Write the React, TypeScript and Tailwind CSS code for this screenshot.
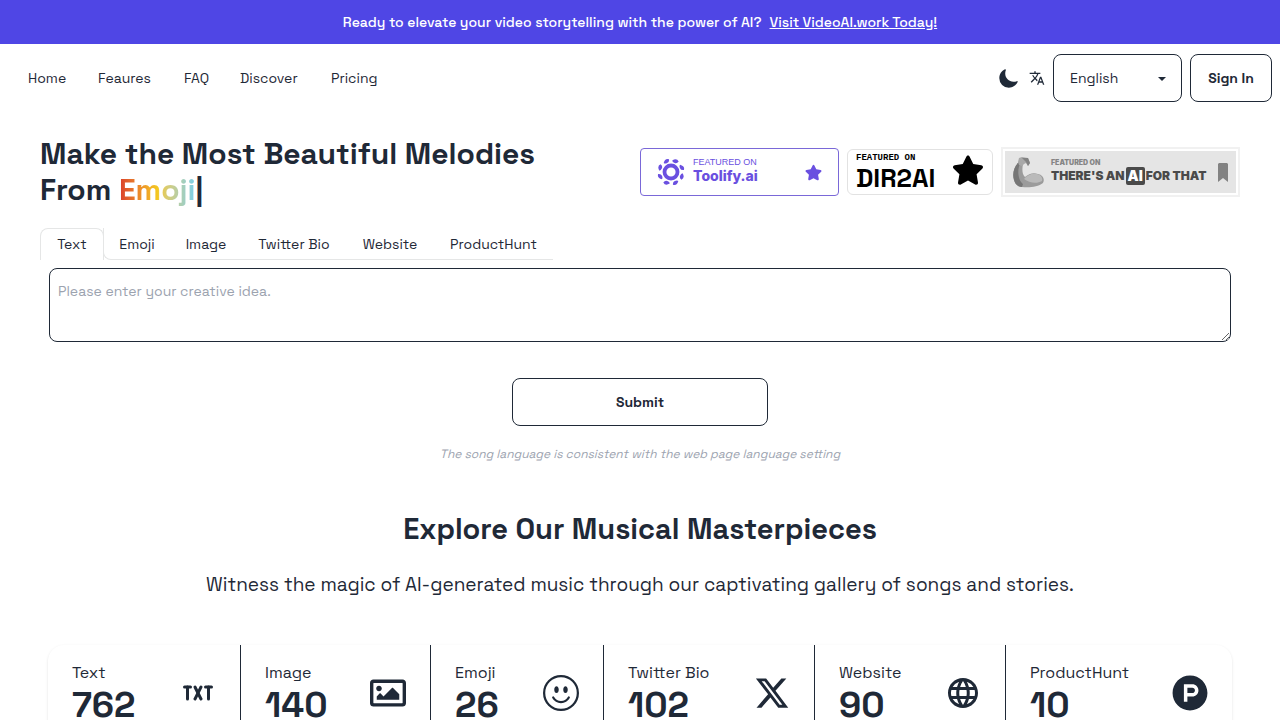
import type { ReactNode } from "react";
import { BsEmojiSmile } from "react-icons/bs";
import { FaRegImage } from "react-icons/fa";
import { FaProductHunt, FaXTwitter } from "react-icons/fa6";
import { IoMoon } from "react-icons/io5";
import { MdLanguage, MdTranslate } from "react-icons/md";
import { TbTxt } from "react-icons/tb";

const star =
  "M12 1.2c.6 0 1 .4 1.3.9l2.8 5.800 6.300.9c1.300.2 1.800 1.700.9 2.600l-4.600 4.500 1.100 6.300c.2 1.300-1.100 2.200-2.200 1.600L12 20.800l-5.600 3c-1.100.6-2.400-.3-2.200-1.600l1.100-6.300L.7 11.400c-.9-.9-.4-2.400.9-2.600l6.300-.9 2.800-5.800c.3-.5.7-.9 1.300-.9z";

function Banner() {
  return (
    <div className="flex h-11 items-center justify-center gap-2 bg-[#4f46e5] px-4 text-sm font-medium text-white">
      <p>Ready to elevate your video storytelling with the power of AI?</p>
      <a href="#videoai" className="underline">
        Visit VideoAI.work Today!
      </a>
    </div>
  );
}

const links = [
  { label: "Home", width: "min-w-[70px]" },
  { label: "Feaures", width: "min-w-[86px]" },
  { label: "FAQ", width: "min-w-14" },
  { label: "Discover", width: "min-w-[91px]" },
  { label: "Pricing", width: "min-w-[76px]" },
];

function Header() {
  return (
    <header className="flex items-center justify-between px-2 py-2.5">
      <nav className="flex pl-1 text-sm">
        {links.map((l) => (
          <a key={l.label} href={`#${l.label}`} className={`${l.width} py-2 pl-4`}>
            {l.label}
          </a>
        ))}
      </nav>
      <div className="flex items-center gap-2">
        <button aria-label="Dark mode" className="pr-0.5">
          <IoMoon size={21} />
        </button>
        <MdTranslate size={16} />
        <div className="relative">
          <select
            aria-label="Language"
            className="h-12 w-[129px] appearance-none rounded-lg border border-[#1f2937] bg-white px-4 text-sm"
          >
            <option>English</option>
            <option>中文</option>
          </select>
          <svg
            viewBox="0 0 8 4"
            className="pointer-events-none absolute top-[23px] right-4 h-1 w-2"
            fill="currentColor"
          >
            <path d="M0 0h8L4 4z" />
          </svg>
        </div>
        <button className="h-12 w-[82px] rounded-lg border border-[#1f2937] text-sm font-bold">
          Sign In
        </button>
      </div>
    </header>
  );
}

function ToolifyBadge() {
  const petals = [0, 45, 90, 135, 180, 225, 270, 315];
  return (
    <a
      href="#toolify"
      className="flex h-12 w-[199px] items-center rounded border border-[#7a68d8] px-4 text-[#6a50e0]"
    >
      <svg viewBox="-14 -14 28 28" className="size-7 shrink-0" fill="currentColor">
        <circle r="6.500" fill="none" stroke="currentColor" strokeWidth="3.800" />
        {petals.map((a) => (
          <path
            key={a}
            transform={`rotate(${a + 22})`}
            d="M-3.200-11.200Q0-15.400 3.200-12.600Q2.400-9.700 0-9.800Q-2.600-9.800-3.200-11.200z"
          />
        ))}
      </svg>
      <span className="flex flex-1 flex-col pb-1 pl-2">
        <span className="font-['Liberation_Sans',sans-serif] text-[9px] leading-3">FEATURED ON</span>
        <span className="font-[Inter,sans-serif] text-sm leading-4 font-extrabold">Toolify.ai</span>
      </span>
      <svg viewBox="0 0 24 25" className="size-[17px]" fill="currentColor">
        <path d={star} />
      </svg>
    </a>
  );
}

function DirBadge() {
  return (
    <a
      href="#dir2ai"
      className="flex h-[46px] w-[146px] items-center justify-between rounded-md border border-[#e2e2e2] px-2 text-black"
    >
      <span className="flex flex-col gap-1">
        <span className="font-['Liberation_Mono',monospace] text-[9px] leading-2 font-bold whitespace-nowrap">
          FEATURED ON
        </span>
        <span className="text-[26px] leading-6 font-bold">DIR2AI</span>
      </span>
      <svg viewBox="0 0 24 25" className="mb-1 size-8 shrink-0" fill="currentColor">
        <path d={star} />
      </svg>
    </a>
  );
}

function ThatBadge() {
  return (
    <a href="#taaft" className="border-2 border-[#f1f1f1] p-0.5">
      <span className="flex h-[42px] w-[231px] items-center bg-[#e5e5e5] px-2 text-[#4a4a4a]">
        <svg viewBox="0 0 32 32" className="size-8 shrink-0">
          <path d="M6 6C1 10-1 18 1 24c1 4 4 7 8 7 7 1 16 0 21-4 2-4 0-8-5-9-5-2-9 0-13 3C9 18 9 13 10 8z" fill="#9b9b9b" />
          <path d="M6 6C1 10-1 18 1 24c1 4 4 7 8 7l1-3C5 24 4 14 7 8z" fill="#767676" />
          <path d="M11 23c3-4 8-6 13-5 4 1 6 4 5 7-5 3-13 2-18-2z" fill="#bababa" />
          <path d="M5 6l1-4 3-1 6 1 2 5-2 3-2-3-2 1-2 2-3-1z" fill="#a8a8a8" />
          <path d="M9 2l6 0 2 5-2 3-2-4z" fill="#828282" />
        </svg>
        <span className="flex flex-1 flex-col pl-1.5 font-[Inter,sans-serif] whitespace-nowrap">
          <span className="text-[7px] leading-2 font-black text-[#858585]">FEATURED ON</span>
          <span className="flex items-center text-xs leading-4 font-black">
            THERE'S AN
            <span className="mx-px rounded-xs bg-[#4a4a4a] px-0.5 text-sm leading-[18px] text-white">AI</span>
            FOR THAT
          </span>
        </span>
        <svg viewBox="0 0 10 19" className="h-[19px] w-2.5 shrink-0" fill="#828282">
          <path d="M1 0h8l1 1v18l-5-4-5 4V1z" />
        </svg>
      </span>
    </a>
  );
}

const tabs = [
  { label: "Emoji", width: "min-w-[66px]" },
  { label: "Image", width: "min-w-[72px]" },
  { label: "Twitter Bio", width: "min-w-[104px]" },
  { label: "Website", width: "min-w-[88px]" },
  { label: "ProductHunt", width: "min-w-[119px]" },
];

function Creator() {
  return (
    <section className="px-10 pt-6">
      <div className="flex items-center justify-between">
        <h1 className="text-3xl leading-9 font-bold">
          Make the Most Beautiful Melodies
          <br />
          From{" "}
          <span className="bg-linear-to-r from-[#d93a2b] via-[#f4c81f] to-[#74cdeb] bg-clip-text text-transparent">
            Emoji
          </span>
          |
        </h1>
        <div className="flex shrink-0 items-center gap-2">
          <ToolifyBadge />
          <DirBadge />
          <ThatBadge />
        </div>
      </div>

      <div role="tablist" className="mt-5 flex h-8 text-sm">
        <button
          role="tab"
          aria-selected="true"
          className="w-16 rounded-t-lg border border-b-0 border-[#e5e6e6] pb-0.5"
        >
          Text
        </button>
        <div className="-ml-px flex rounded-bl-lg border-b border-l border-[#e5e6e6]">
          {tabs.map((t) => (
            <button key={t.label} role="tab" aria-selected="false" className={`${t.width} text-center`}>
              {t.label}
            </button>
          ))}
        </div>
      </div>

      <form className="flex flex-col items-center px-[9px] pt-2">
        <textarea
          aria-label="Creative idea"
          placeholder="Please enter your creative idea."
          className="block h-[74px] w-full rounded-lg border border-[#1f2937] px-2 py-3 text-sm placeholder:text-[#9ca3af]"
        />
        <button
          type="button"
          className="mt-9 h-12 w-64 rounded-lg border border-[#1f2937] text-sm font-bold"
        >
          Submit
        </button>
        <p className="mt-5 text-xs text-[#9ca3af] italic">
          The song language is consistent with the web page language setting
        </p>
      </form>
    </section>
  );
}

function Stat({ title, value, icon }: { title: string; value: number; icon: ReactNode }) {
  return (
    <div className="flex items-center justify-between border-r border-[#1f2937] px-6 py-4 last:border-r-0">
      <dl>
        <dt className="whitespace-nowrap">{title}</dt>
        <dd className="text-4xl leading-10 font-bold">{value}</dd>
      </dl>
      {icon}
    </div>
  );
}

function Gallery() {
  return (
    <section className="px-12 pt-[47px] pb-10">
      <h2 className="text-center text-[29px] leading-10 font-bold">Explore Our Musical Masterpieces</h2>
      <p className="mt-[22px] text-center text-[19px] leading-7">
        Witness the magic of AI-generated music through our captivating gallery of songs and stories.
      </p>
      <div className="mt-[46px] grid grid-cols-[193fr_190fr_173fr_211fr_191fr_226fr] overflow-hidden rounded-2xl shadow-sm">
        <Stat title="Text" value={762} icon={<TbTxt size={36} />} />
        <Stat title="Image" value={140} icon={<FaRegImage size={36} />} />
        <Stat title="Emoji" value={26} icon={<BsEmojiSmile size={36} />} />
        <Stat title="Twitter Bio" value={102} icon={<FaXTwitter size={36} />} />
        <Stat title="Website" value={90} icon={<MdLanguage size={36} />} />
        <Stat title="ProductHunt" value={10} icon={<FaProductHunt size={36} />} />
      </div>
    </section>
  );
}

export default function App() {
  return (
    <div className="min-h-screen bg-white font-['Space_Grotesk',Inter,sans-serif] text-[#1f2937]">
      <Banner />
      <Header />
      <main>
        <Creator />
        <Gallery />
      </main>
    </div>
  );
}
